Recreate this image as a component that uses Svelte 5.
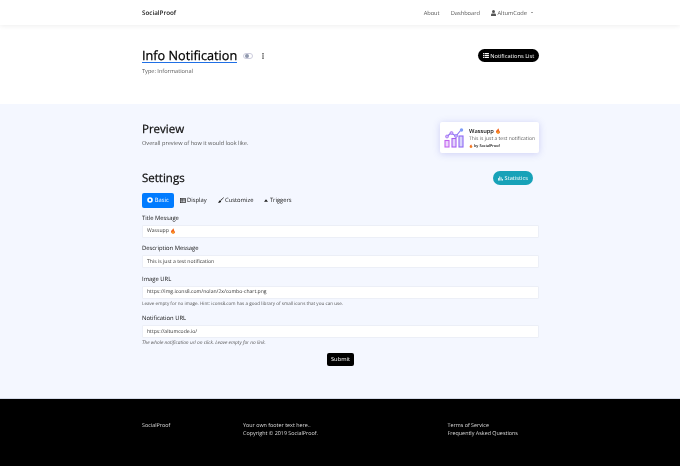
<script lang="ts">
  const tabs = [
    { name: "Basic", icon: "gear", active: true },
    { name: "Display", icon: "display", active: false },
    { name: "Customize", icon: "brush", active: false },
    { name: "Triggers", icon: "caret", active: false },
  ];
</script>

{#snippet flame(size)}
  <svg class="flame" width={size} height={size} viewBox="0 0 12 12">
    <path d="M6 .5c.6 2-2.400 3.200-3.600 5.200C1.200 7.800 2.400 11.500 6 11.500s4.800-3.200 3.800-5.600C9.400 6.800 8.800 7 8.400 7 8.800 4.500 7.600 1.800 6 .5z" fill="#f0641e" />
    <path d="M6 6c.2 1-1.600 1.700-1.600 3.100 0 1.200.8 2.400 1.600 2.400s1.800-1 1.800-2.300C7.800 8 6.800 6.800 6 6z" fill="#fbb024" />
  </svg>
{/snippet}

<div class="page">
  <nav>
    <div class="wrap nav-row">
      <span class="brand">SocialProof</span>
      <div class="nav-links">
        <span>About</span>
        <span>Dashboard</span>
        <span class="user">
          <svg width="5" height="6" viewBox="0 0 10 12"><circle cx="5" cy="3" r="3" fill="#555" /><path d="M0 12V9.500C0 8 1.500 7 3 7h4c1.500 0 3 1 3 2.500V12z" fill="#555" /></svg>
          AltumCode
          <i class="caret"></i>
        </span>
      </div>
    </div>
  </nav>

  <header>
    <div class="wrap head-row">
      <div>
        <div class="title-row">
          <h1>Info Notification</h1>
          <span class="switch"><i></i></span>
          <svg class="dots" width="2" height="6" viewBox="0 0 2 7"><circle cx="1" cy="1" r=".9" /><circle cx="1" cy="3.500" r=".9" /><circle cx="1" cy="6" r=".9" /></svg>
        </div>
        <p class="muted">Type: Informational</p>
      </div>
      <button class="pill dark">
        <svg width="6" height="5" viewBox="0 0 7 6" fill="#fff"><rect width="1.500" height="1.400" /><rect x="2" width="5" height="1.400" /><rect y="2.300" width="1.500" height="1.400" /><rect x="2" y="2.300" width="5" height="1.400" /><rect y="4.600" width="1.500" height="1.400" /><rect x="2" y="4.600" width="5" height="1.400" /></svg>
        Notifications List
      </button>
    </div>
  </header>

  <main>
    <div class="wrap">
      <section class="preview-row">
        <div class="preview-text">
          <h2>Preview</h2>
          <p class="muted">Overall preview of how it would look like.</p>
        </div>
        <div class="toast">
          <svg class="chart" width="20" height="20" viewBox="0 0 20 20" fill="none" stroke-width="1.100">
            <rect x="1" y="12.500" width="4" height="6.500" fill="#ecd4fb" stroke="#c263ee" />
            <rect x="8" y="10.500" width="4" height="8.500" fill="#e2d4fb" stroke="#a860f0" />
            <rect x="15" y="8" width="4" height="11" fill="#d8d4fb" stroke="#8f68f5" />
            <path d="M3 8.500l4-3.500 5 3 5-6" stroke="#8a72f3" />
            <circle cx="3" cy="8.500" r="1.500" fill="#c9b5fa" stroke="#a565f2" stroke-width=".7" />
            <circle cx="7.500" cy="5" r="1.500" fill="#c9b5fa" stroke="#a565f2" stroke-width=".7" />
            <circle cx="12" cy="8" r="1.500" fill="#c9b5fa" stroke="#8f68f5" stroke-width=".7" />
            <circle cx="17.500" cy="2" r="1.700" fill="#7f9df8" />
          </svg>
          <div class="toast-body">
            <strong>Wassupp {@render flame(6)}</strong>
            <span class="toast-desc">This is just a test notification</span>
            <span class="toast-by">{@render flame(4)} by SocialProof</span>
          </div>
        </div>
      </section>

      <section class="settings-row">
        <h2>Settings</h2>
        <button class="pill teal">
          <svg width="5" height="5" viewBox="0 0 6 5" fill="#fff"><rect y="2" width="1" height="3" /><rect x="1.600" width="1" height="5" /><rect x="3.200" y="1" width="1" height="4" /><rect x="4.800" y="3" width="1" height="2" /></svg>
          Statistics
        </button>
      </section>

      <div class="tabs">
        {#each tabs as tab}
          <span class="tab" class:active={tab.active}>
            {#if tab.icon === "gear"}
              <svg width="6" height="6" viewBox="0 0 6 6"><circle cx="3" cy="3" r="2" fill="none" stroke="#fff" stroke-width="1.600" /></svg>
            {:else if tab.icon === "display"}
              <svg width="6" height="5" viewBox="0 0 7 6"><rect x=".4" y=".4" width="6.200" height="5.200" fill="none" stroke="#222" stroke-width=".8" /><path d="M.5 2h6M.5 3.500h6M2.500 1v4" stroke="#222" stroke-width=".7" /></svg>
            {:else if tab.icon === "brush"}
              <svg width="6" height="6" viewBox="0 0 6 6"><path d="M5.700.3L2.600 3l.6.600L6 .6zM2.200 3.300C1 3.400 1.300 5 0 5.400c1.500.6 3.200.2 3-1.400z" fill="#111" /></svg>
            {:else}
              <svg width="4" height="3" viewBox="0 0 5 3"><path d="M2.500 0L5 3H0z" fill="#222" /></svg>
            {/if}
            {tab.name}
          </span>
        {/each}
      </div>

      <form>
        <label class="field">
          <span class="label">Title Message</span>
          <span class="input">Wassupp {@render flame(6)}</span>
        </label>
        <label class="field">
          <span class="label">Description Message</span>
          <span class="input">This is just a test notification</span>
        </label>
        <label class="field hinted">
          <span class="label">Image URL</span>
          <span class="input">https://img.icons8.com/nolan/2x/combo-chart.png</span>
          <small>Leave empty for no image. Hint: icons8.com has a good library of small icons that you can use.</small>
        </label>
        <label class="field hinted">
          <span class="label">Notification URL</span>
          <span class="input">https://altumcode.io/</span>
          <small><em>The whole notification url on click. Leave empty for no link.</em></small>
        </label>
        <div class="submit-row"><button class="submit" type="button">Submit</button></div>
      </form>
    </div>
  </main>

  <footer>
    <div class="wrap foot-row">
      <div>SocialProof</div>
      <div>Your own footer text here..<br />Copyright © 2019 SocialProof.</div>
      <div>Terms of Service<br />Frequently Asked Questions</div>
    </div>
  </footer>
</div>

<style>
  :global(body) {
    margin: 0;
    font-family: "Open Sans", "DejaVu Sans", sans-serif;
    color: #333;
    background: #fff;
    overflow: hidden;
  }

  /* the reference is a scaled down capture, its edges are all a little soft */
  .page {
    filter: blur(0.4px);
    text-rendering: geometricPrecision;
  }

  .wrap {
    width: 397px;
    margin-left: 142px;
  }

  nav {
    height: 25px;
    box-shadow: 0 1px 5px rgba(0, 0, 0, 0.07);
    position: relative;
    background: #fff;
  }
  .nav-row {
    height: 100%;
    display: flex;
    align-items: center;
    justify-content: space-between;
  }
  .brand {
    font-size: 6.300px;
    color: #222;
    font-weight: 600;
  }
  .nav-links {
    display: flex;
    gap: 11px;
    font-size: 5.700px;
    color: #555;
    padding-right: 6px;
  }
  .user {
    display: flex;
    align-items: center;
    gap: 1.500px;
  }
  .caret {
    margin-left: 2.500px;
    border: 1.500px solid transparent;
    border-top-color: #444;
    border-bottom: 0;
  }

  header {
    height: 79px;
    box-sizing: border-box;
    padding-top: 24px;
  }
  .head-row {
    display: flex;
    justify-content: space-between;
    align-items: flex-start;
  }
  .title-row {
    display: flex;
    align-items: center;
    gap: 6px;
  }
  h1 {
    margin: 0;
    font-size: 12.700px;
    line-height: 13px;
    font-weight: 400;
    color: #000;
    -webkit-text-stroke: 0.25px;
    border-bottom: 1.500px solid #1f6fe5;
  }
  h2 {
    margin: 0;
    font-size: 11.500px;
    line-height: 15px;
    font-weight: 400;
    color: #111;
    -webkit-text-stroke: 0.25px;
  }
  .muted {
    margin: 0;
    font-size: 5.600px;
    color: #555;
  }
  header .muted {
    margin-top: 4px;
  }
  .switch {
    width: 10px;
    height: 6px;
    border: 0.5px solid #ccd;
    border-radius: 3px;
    display: inline-flex;
    align-items: center;
    box-sizing: border-box;
  }
  .switch i {
    width: 4px;
    height: 4px;
    border-radius: 50%;
    background: #8f98ad;
    margin-left: 0.500px;
  }
  .dots {
    margin-left: 3px;
    fill: #333;
  }

  .pill {
    border: 0;
    font-family: inherit;
    color: #fff;
    border-radius: 7px;
    display: inline-flex;
    align-items: center;
    justify-content: center;
    gap: 1.500px;
    padding: 0;
    height: 13px;
    font-size: 5.700px;
  }
  .dark {
    background: #000;
    width: 61px;
  }
  .teal {
    background: #17a2b8;
    width: 40px;
    height: 14px;
    margin-right: 6px;
  }

  main {
    background: #f4f7ff;
    height: 294px;
    box-sizing: border-box;
    padding-top: 17px;
  }
  .preview-row {
    display: flex;
    justify-content: space-between;
    align-items: flex-start;
    height: 48px;
  }
  .preview-text {
    padding-top: 1px;
  }
  .preview-text .muted {
    margin-top: 2px;
  }
  .toast {
    width: 99px;
    height: 31px;
    background: #fff;
    border-radius: 2px;
    box-shadow: 0 1px 7px rgba(90, 90, 220, 0.25);
    display: flex;
    align-items: center;
    gap: 5px;
    box-sizing: border-box;
    padding-left: 4px;
    margin-top: 1px;
  }
  .toast-body {
    display: flex;
    flex-direction: column;
    gap: 1.500px;
    white-space: nowrap;
  }
  .toast-body strong {
    font-size: 5.700px;
    font-weight: 600;
    color: #111;
    display: flex;
    align-items: center;
    gap: 1.500px;
  }
  .toast-desc {
    font-size: 5px;
    color: #666;
  }
  .toast-by {
    font-size: 3.800px;
    color: #111;
    display: flex;
    align-items: center;
    gap: 1px;
    font-weight: 600;
  }

  .settings-row {
    display: flex;
    justify-content: space-between;
    align-items: center;
    height: 18px;
  }

  .tabs {
    display: flex;
    margin-top: 6px;
    font-size: 5.800px;
    color: #111;
  }
  .tab {
    display: inline-flex;
    align-items: center;
    gap: 1.500px;
    height: 14.500px;
    padding: 0 5.500px;
    border-radius: 2px;
  }
  .tab.active {
    background: #007bff;
    color: #fff;
    width: 32px;
    justify-content: center;
    padding: 0;
  }

  form {
    margin-top: 6.500px;
  }
  .field {
    display: block;
    margin-bottom: 6.800px;
  }
  .field.hinted {
    margin-bottom: 7.800px;
  }
  .label {
    display: block;
    font-size: 5.850px;
    color: #111;
    line-height: 8px;
    margin-bottom: 3px;
  }
  .input {
    display: flex;
    align-items: center;
    gap: 1.500px;
    height: 12.700px;
    box-sizing: border-box;
    padding-left: 4px;
    font-size: 5.100px;
    color: #333;
    background: #fff;
    border: 0.5px solid #eceff7;
    border-radius: 1px;
  }
  small {
    display: block;
    font-size: 4.600px;
    line-height: 6px;
    color: #555;
    margin-top: 2px;
  }
  em {
    font-size: 4.800px;
  }
  .submit-row {
    display: flex;
    justify-content: center;
    margin-top: -1px;
  }
  .submit {
    width: 27px;
    height: 13px;
    padding: 0;
    background: #000;
    color: #fff;
    border: 0;
    border-radius: 2px;
    font-family: inherit;
    font-size: 5.800px;
  }

  footer {
    background: #000;
    border-top: 1px solid #d5dbe8;
    box-sizing: border-box;
    height: 68px;
    padding-top: 23px;
  }
  .foot-row {
    display: grid;
    grid-template-columns: 101px 204.500px 1fr;
    font-size: 5.400px;
    line-height: 7.700px;
    color: #ddd;
  }
</style>
